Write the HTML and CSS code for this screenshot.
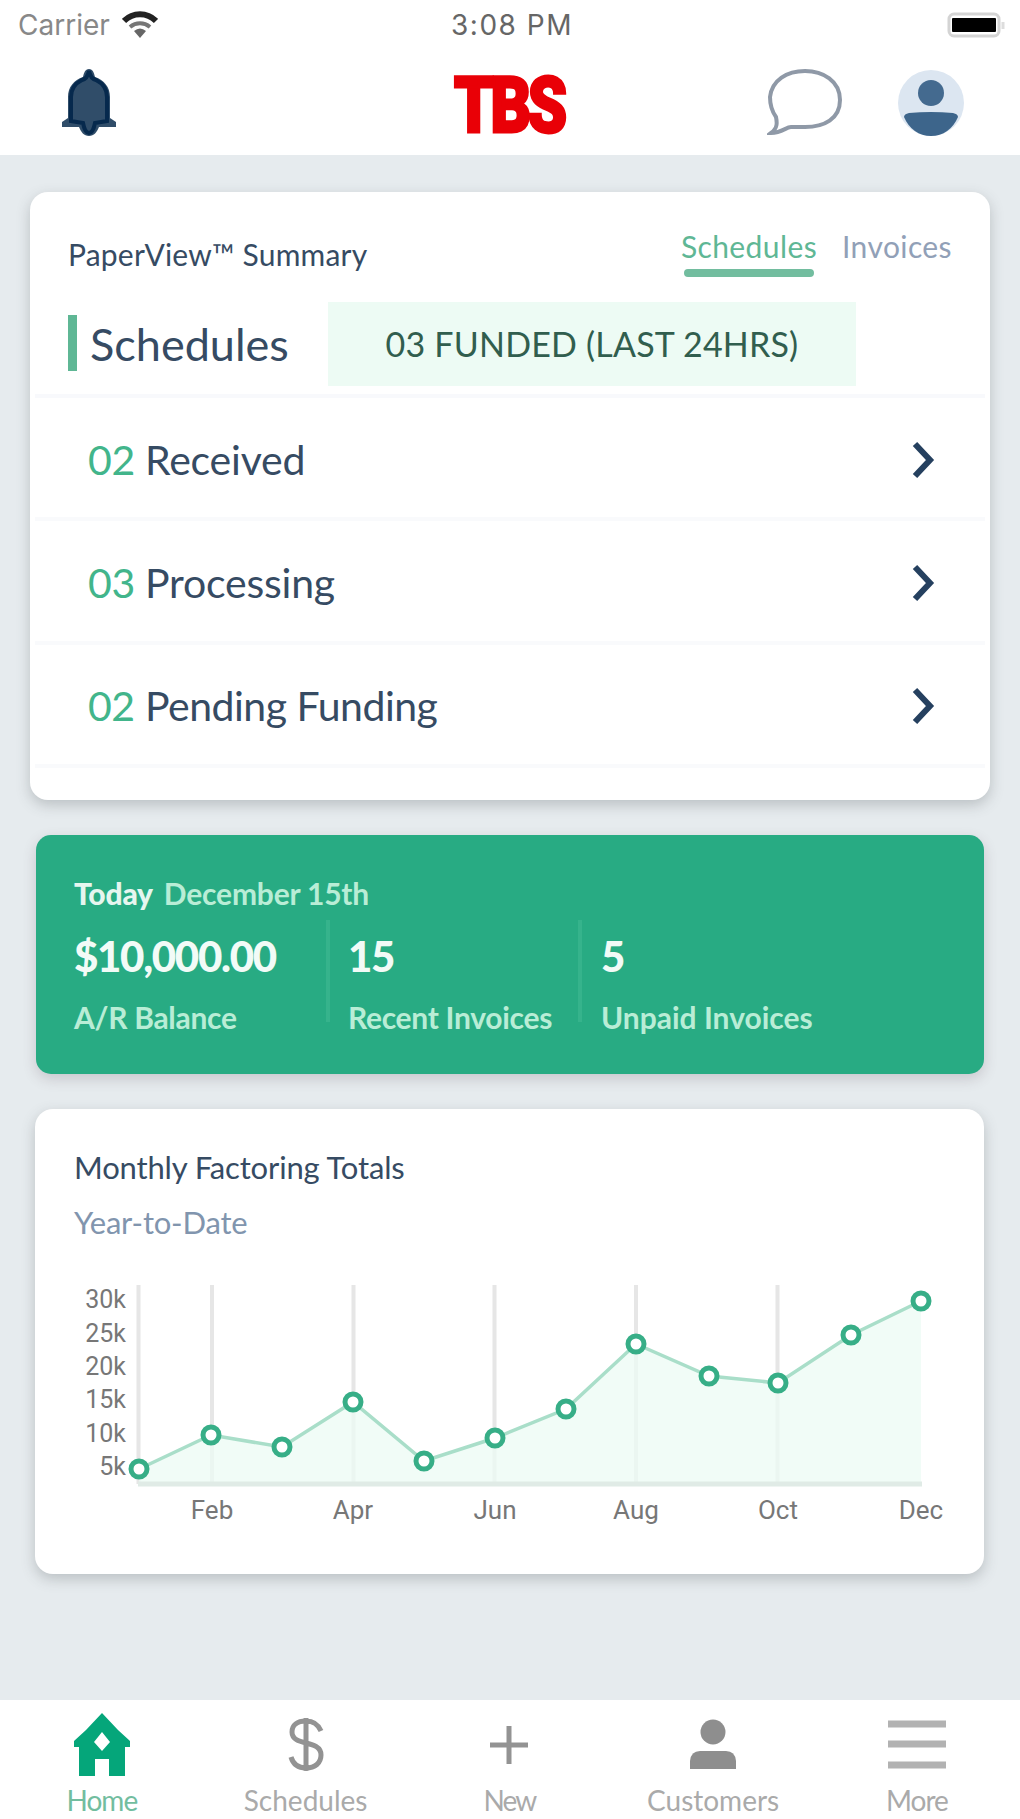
FILE: index.html
```
<!DOCTYPE html>
<html lang="en">
<head>
<meta charset="utf-8">
<title>TBS Dashboard</title>
<link rel="stylesheet" href="styles.css">
</head>
<body>
<header class="header">
  <div class="status">
    <div class="carrier"><span>Carrier</span>
      <svg width="36" height="28" viewBox="0 0 36 28"><path d="M2 10C11 1 25 1 34 10" fill="none" stroke="#222" stroke-width="6"/><path d="M8 16c6-5 14-5 20 0" fill="none" stroke="#777" stroke-width="4"/><path d="M12 20q6-5 12 0l-6 7z" fill="#666"/></svg>
    </div>
    <span class="time">3:08 PM</span>
    <svg class="battery" width="60" height="32" viewBox="0 0 60 32"><rect x="3" y="5" width="50" height="22" rx="5" fill="#fff" stroke="#d4d4d4" stroke-width="3"/><rect x="6" y="9" width="44" height="14" rx="1"/><path d="M57 13v7" stroke="#ddd" stroke-width="3"/></svg>
  </div>
  <div class="bar">
    <svg width="56" height="70" viewBox="0 0 56 70"><path d="M28 1c4 0 5 4 6 8 9 3 15 10 15 20v21l6 4v5H38c-2 5-5 9-10 9s-8-4-10-9H1v-5l6-4V29C7 19 13 12 22 9c1-4 2-8 6-8z" fill="#304d69"/><path d="M28 3c1 5 3 8 7 9 6 3 11 9 11 17v24l-12 2q-2 10-6 10t-6-10l-12-2V29c0-8 5-14 11-17 4-1 6-4 7-9z" fill="none" stroke="#06294d" stroke-width="4"/></svg>
    <svg class="logo" width="160" height="104" viewBox="0 0 160 104"><text x="23" y="81" textLength="110" lengthAdjust="spacingAndGlyphs">TBS</text></svg>
    <svg class="chat" width="76" height="72" viewBox="0 0 76 72"><path d="M4 66C11 61 10 55 9 50 4 43 3 36 3 30 5 13 20 4 38 4s35 10 35 29S57 60 38 60H24c-5 0-9 6-20 6z" fill="none" stroke="#8f99a7" stroke-width="4"/></svg>
    <svg class="avatar" width="68" height="68" viewBox="0 0 68 68"><circle cx="34" cy="34" r="33" fill="#dce6f1"/><circle cx="34" cy="24" r="13" fill="#446a8f"/><path d="M7 48q0-3 5-4 22-2 44 0 5 1 5 4C56 60 46 67 34 67S12 60 7 48z" fill="#3d658b"/></svg>
  </div>
</header>
<main class="main">
  <section class="card summary">
    <div class="summary-head">
      <h2>PaperView™ Summary</h2>
      <nav class="tabs"><span class="tab active">Schedules</span><span class="tab">Invoices</span></nav>
    </div>
    <div class="sched"><i class="mark"></i><h1>Schedules</h1><div class="badge">03 FUNDED (LAST 24HRS)</div></div>
    <div class="row"><b>02</b><span>Received</span><svg width="26" height="40" viewBox="0 0 26 40"><path d="M4 4l15 16L4 36" fill="none" stroke="#25405f" stroke-width="6"/></svg></div>
    <div class="row"><b>03</b><span>Processing</span><svg width="26" height="40" viewBox="0 0 26 40"><path d="M4 4l15 16L4 36" fill="none" stroke="#25405f" stroke-width="6"/></svg></div>
    <div class="row pending"><b>02</b><span>Pending Funding</span><svg width="26" height="40" viewBox="0 0 26 40"><path d="M4 4l15 16L4 36" fill="none" stroke="#25405f" stroke-width="6"/></svg></div>
  </section>
  <section class="today">
    <div class="date"><b>Today</b><span>December 15th</span></div>
    <div class="stats">
      <div class="stat s1"><strong>$10,000.00</strong><span>A/R Balance</span></div>
      <div class="stat s2"><strong>15</strong><span>Recent Invoices</span></div>
      <div class="stat s3"><strong>5</strong><span>Unpaid Invoices</span></div>
    </div>
  </section>
  <section class="card totals">
    <h2>Monthly Factoring Totals</h2>
    <p>Year-to-Date</p>
    <svg class="chart" width="949" height="300" viewBox="35 1274 949 300">
      <path class="grid" d="M138.500 1285V1484M212 1285V1484M353.500 1285V1484M494.500 1285V1484M636 1285V1484M777.500 1285V1484"/>
      <path class="area" d="M139 1469L211 1435 282 1447 353 1402 424 1461 495 1438 566 1409 636 1344 709 1376 778 1383 851 1335 921 1301V1484H139z"/>
      <path class="axis" d="M138 1484H922"/>
      <path class="line" d="M139 1469L211 1435 282 1447 353 1402 424 1461 495 1438 566 1409 636 1344 709 1376 778 1383 851 1335 921 1301"/>
      <g class="dots"><circle cx="139" cy="1469" r="8"/><circle cx="211" cy="1435" r="8"/><circle cx="282" cy="1447" r="8"/><circle cx="353" cy="1402" r="8"/><circle cx="424" cy="1461" r="8"/><circle cx="495" cy="1438" r="8"/><circle cx="566" cy="1409" r="8"/><circle cx="636" cy="1344" r="8"/><circle cx="709" cy="1376" r="8"/><circle cx="778" cy="1383" r="8"/><circle cx="851" cy="1335" r="8"/><circle cx="921" cy="1301" r="8"/></g>
      <g class="ylab"><text x="126" y="1308">30k</text><text x="126" y="1342">25k</text><text x="126" y="1375">20k</text><text x="126" y="1408">15k</text><text x="126" y="1442">10k</text><text x="126" y="1475">5k</text></g>
      <g class="xlab"><text x="212" y="1519">Feb</text><text x="353" y="1519">Apr</text><text x="495" y="1519">Jun</text><text x="636" y="1519">Aug</text><text x="778" y="1519">Oct</text><text x="921" y="1519">Dec</text></g>
    </svg>
  </section>
</main>
<nav class="nav">
  <div class="item on"><svg width="60" height="68" viewBox="0 0 60 68"><path fill-rule="evenodd" d="M30 2L46 19 58 30V36H53V65H37V48H23V65H7V36H2V30L14 19zM30 21L22 31 30 40 38 31z"/></svg><span>Home</span></div>
  <div class="item"><svg width="60" height="68" viewBox="0 0 60 68"><path class="st" d="M45 20C42 13 36 10 30 10c-9 0-14 4-14 11 0 15 29 7 29 23 0 8-6 13-15 13-8 0-13-4-15-11M30 7V60"/></svg><span>Schedules</span></div>
  <div class="item"><svg width="60" height="68" viewBox="0 0 60 68"><path class="st" d="M11 34H49M30 15V53"/></svg><span class="new">New</span></div>
  <div class="item"><svg width="60" height="68" viewBox="0 0 60 68"><circle cx="30" cy="21" r="12.500"/><path d="M7 58V50Q8 40 17 40H43Q52 40 53 50V58z"/></svg><span>Customers</span></div>
  <div class="item"><svg width="60" height="68" viewBox="0 0 60 68"><path class="menu" d="M1 13H59M1 33H59M1 54H59"/></svg><span class="more">More</span></div>
</nav>
</body>
</html>
```
FILE: styles.css
```
* { box-sizing: border-box; }
body { margin: 0; width: 1020px; height: 1819px; display: flex; flex-direction: column; background: #e6ebee; font-family: Lato, sans-serif; color: #364b63; }
h1, h2, p { margin: 0; font-weight: 400; }
svg { display: block; flex: none; }
.header { height: 155px; background: #fff; }
.status { height: 50px; display: grid; grid-template-columns: 1fr auto 1fr; align-items: center; padding: 0 14px 0 18px; font: 28px/50px Inter, sans-serif; color: #888; }
.carrier { display: flex; gap: 12px; align-items: center; }
.time { color: #666; letter-spacing: 1.500px; }
.battery { justify-self: end; }
.bar { display: flex; align-items: center; height: 105px; padding: 0 55px 0 61px; }
.logo { margin-left: 314px; }
.logo text { font: 900 78px Roboto, sans-serif; fill: #e90007; stroke: #e90007; stroke-width: 3px; letter-spacing: -4px; }
.chat { margin-left: 176px; }
.avatar { margin-left: 54px; }
.main { flex: 1; padding-top: 37px; }
.card { background: #fff; border-radius: 18px; box-shadow: 0 5px 14px rgba(60, 70, 75, .26); }
.summary { width: 960px; height: 608px; margin-left: 30px; }
.summary-head { height: 110px; padding: 0 38px; display: flex; justify-content: space-between; }
.summary-head h2 { font-size: 30px; line-height: 36px; padding-top: 44px; letter-spacing: .2px; }
.tabs { display: flex; gap: 25px; padding-top: 36px; font-size: 30px; line-height: 36px; color: #91a0b7; }
.tab { letter-spacing: .4px; }
.tab.active { color: #5fb795; }
.tab.active::after { content: ""; display: block; width: 130px; height: 8px; margin: 5px 0 0 3px; border-radius: 4px; background: #72bd9f; }
.sched { height: 96px; display: flex; align-items: flex-start; border-bottom: 4px solid #f8f9fc; margin: 0 5px; padding-left: 33px; }
.mark { width: 9px; height: 56px; margin-top: 13px; background: #5fb795; }
.sched h1 { width: 251px; padding-left: 13px; font-size: 45px; line-height: 56px; margin-top: 14px; }
.badge { width: 528px; height: 84px; background: #edfbf4; color: #315e4e; text-align: center; font-size: 34px; line-height: 84px; letter-spacing: .2px; }
.row { height: 123.300px; margin: 0 5px; padding: 4px 48px 0 53px; display: flex; align-items: center; border-bottom: 4px solid #f9fafc; font-size: 41px; line-height: 50px; letter-spacing: -.2px; }
.pending { letter-spacing: -.5px; }
.row b { width: 57px; font-weight: 400; color: #42b58b; }
.row svg { margin-left: auto; }
.today { width: 948px; height: 239px; margin: 35px 0 0 36px; padding: 38px 38px 0; border-radius: 15px; background: #28ab83; box-shadow: 0 5px 14px rgba(80, 60, 75, .2); color: #b9edd6; }
.date { display: flex; gap: 11px; font-size: 30px; line-height: 40px; font-weight: 700; letter-spacing: -.2px; }
.date b { color: #e6f6ef; }
.stats { display: flex; margin-top: 7px; }
.stat { height: 102px; font-weight: 700; }
.stat strong, .stat span { display: block; }
.stat strong { font-size: 42px; line-height: 50px; letter-spacing: -1.300px; color: #f2fbf7; margin-top: 11px; }
.stat span { font-size: 30px; line-height: 40px; margin-top: 16px; letter-spacing: -.3px; }
.stat.s3 span { letter-spacing: 0; }
.s1 { width: 256px; border-right: 4px solid #36b38c; margin-right: 18px; }
.s2 { width: 234px; border-right: 4px solid #36b38c; margin-right: 19px; }
.totals { width: 949px; height: 465px; margin: 35px 0 0 35px; overflow: hidden; }
.totals h2 { font-size: 31px; line-height: 40px; padding: 38px 39px 0; letter-spacing: -.15px; }
.totals p { font-size: 31px; line-height: 40px; padding: 15px 39px 0; letter-spacing: -.2px; color: #8195ae; }
.chart { margin-top: 32px; }
.grid { stroke: #e6e6e6; stroke-width: 4; }
.area { fill: #ecfbf4; fill-opacity: .75; }
.axis { stroke: #e0ebe6; stroke-width: 5; }
.line { fill: none; stroke: #a9dec9; stroke-width: 3.500; }
.dots { fill: #fff; stroke: #37ae87; stroke-width: 5; }
.ylab, .xlab { font-family: Roboto, sans-serif; font-size: 25px; fill: #777; text-anchor: end; }
.xlab { font-size: 26px; text-anchor: middle; }
.nav { height: 119px; background: #fff; display: grid; grid-template-columns: repeat(5, 203.750px); }
.item { display: flex; flex-direction: column; align-items: center; padding-top: 11px; font-size: 28px; line-height: 36px; color: #aaa; fill: #8e8e8e; }
.item span { margin-top: 3px; }
.on { color: #72bd9f; fill: #05a67a; letter-spacing: -1px; }
.new { letter-spacing: -2px; }
.more { letter-spacing: -1px; }
.st { fill: none; stroke: #939393; stroke-width: 5; }
.menu { stroke: #b2b2b2; stroke-width: 7; }
```
